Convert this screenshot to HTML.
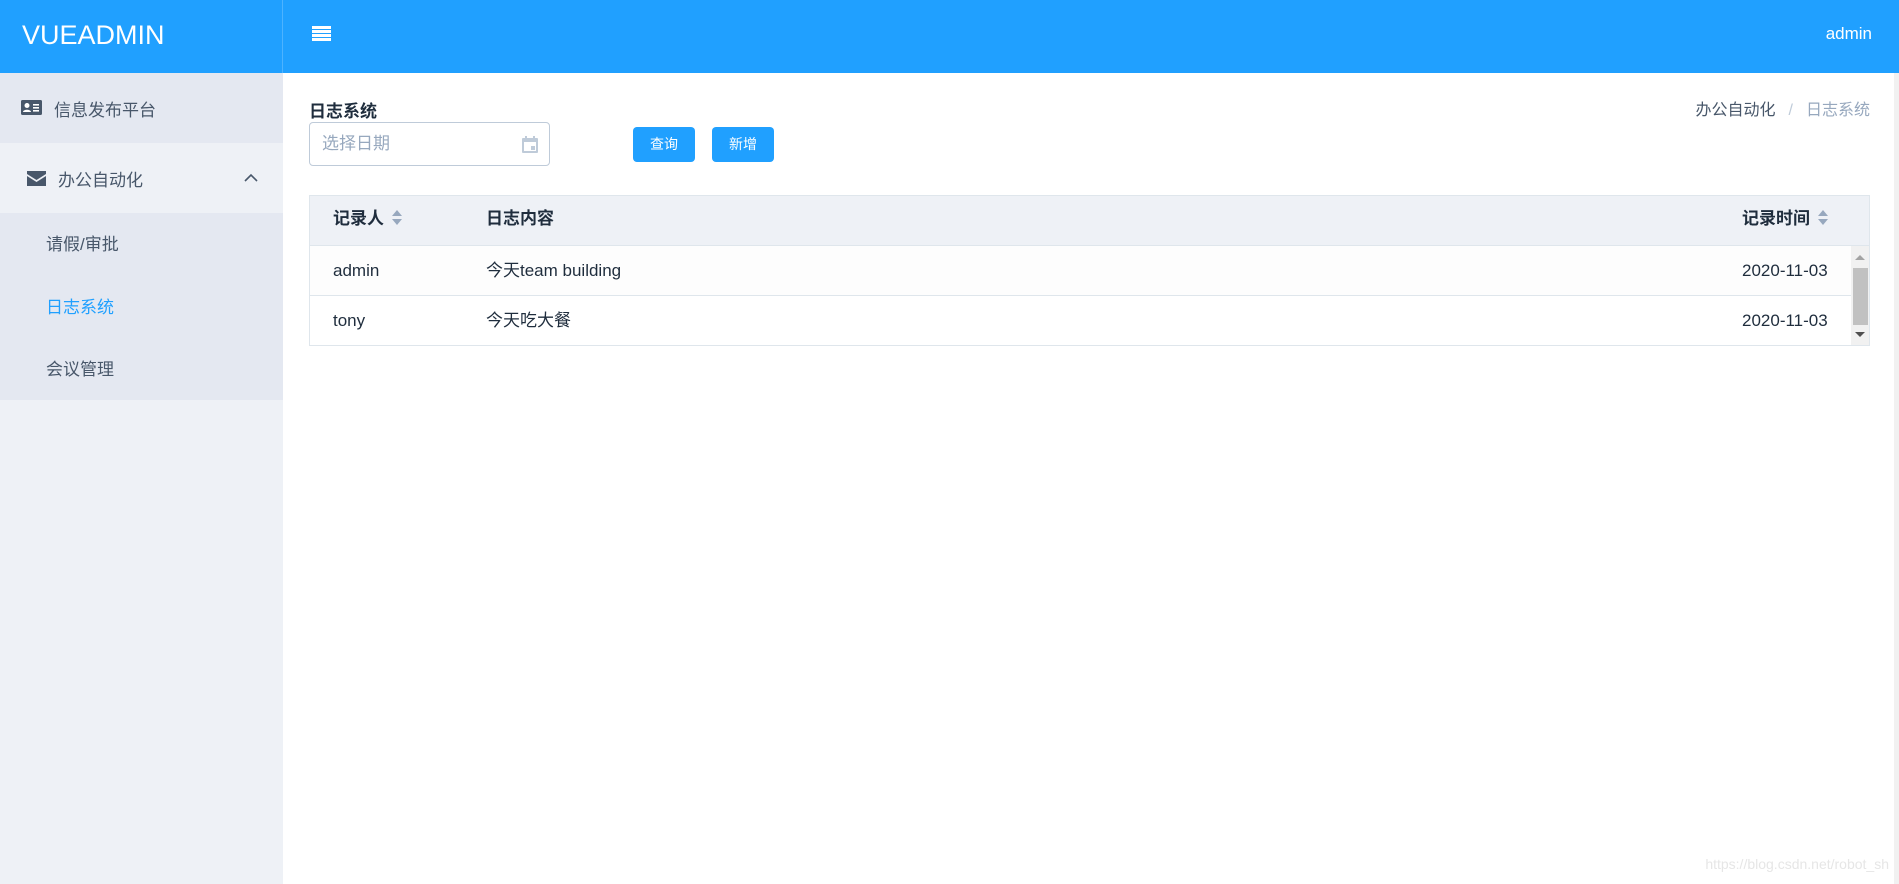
<!DOCTYPE html>
<html><head><meta charset="utf-8"><style>
*{margin:0;padding:0;box-sizing:border-box}
body{width:1899px;height:884px;overflow:hidden;background:#fff;font-family:"Liberation Sans","Noto Sans CJK SC",sans-serif;position:relative;color:#1f2d3d}
.abs{position:absolute}
.hdr{left:0;top:0;width:1899px;height:73px;background:#20a0ff}
.logo{left:0;top:0;width:283px;height:73px;border-right:1px solid #4db3ff;color:#fff;font-size:27px;line-height:71px;padding-left:22px}
.side{left:0;top:73px;width:283px;height:811px;background:#eef1f6}
.row{position:absolute;left:0;width:283px;font-size:17px;color:#48576a;display:flex;align-items:center}
.th{font-weight:bold;font-size:17px;color:#1f2d3d;line-height:46px;height:46px;white-space:nowrap}
.td{font-size:17px;color:#1f2d3d;line-height:50px;height:50px;white-space:nowrap}
.sort{display:inline-block;vertical-align:middle;margin-left:8px;width:10px;height:16px;position:relative;top:-2px}
.sort:before{content:"";position:absolute;left:0;top:0;border:5px solid transparent;border-bottom:6px solid #97a8be;border-top:0}
.sort:after{content:"";position:absolute;left:0;top:9px;border:5px solid transparent;border-top:6px solid #97a8be;border-bottom:0}
.btn{background:#20a0ff;color:#fff;font-size:14px;border-radius:4px;text-align:center;line-height:35px;height:35px;top:127px}
</style></head><body>
<div class="abs hdr"></div>
<div class="abs logo">VUEADMIN</div>
<div class="abs" style="left:312px;top:26px;width:19px">
 <div style="height:3px;background:#fff;margin-bottom:1px"></div><div style="height:3px;background:#fff;margin-bottom:1px"></div><div style="height:3px;background:#fff;margin-bottom:1px"></div><div style="height:3px;background:#fff"></div>
</div>
<div class="abs" style="right:27px;top:24px;color:#fff;font-size:17px">admin</div>

<div class="abs side"></div>
<div class="row" style="top:73px;height:70px;background:#e4e8f1">
 <svg style="margin-left:21px" width="21" height="16" viewBox="0 0 21 16"><rect x="0" y="0" width="21" height="15" rx="1.5" fill="#48576a"/><circle cx="6" cy="5.5" r="2.5" fill="#fff"/><path d="M2 12c0-3 8-3 8 0z" fill="#fff"/><rect x="12" y="4" width="6" height="1.6" fill="#fff"/><rect x="12" y="7" width="6" height="1.6" fill="#fff"/><rect x="12" y="10" width="6" height="1.6" fill="#fff"/></svg>
 <span style="margin-left:12px">信息发布平台</span></div>
<div class="row" style="top:143px;height:70px;background:#eef1f6">
 <svg style="margin-left:27px" width="19" height="16" viewBox="0 0 19 16"><path d="M0 1h19v3l-9.5 6L0 4z" fill="#48576a"/><path d="M0 6l9.5 6 9.5-6v10H0z" fill="#48576a"/></svg>
 <span style="margin-left:12px">办公自动化</span>
 <svg style="position:absolute;left:244px;top:30px" width="14" height="9" viewBox="0 0 14 9"><path d="M1 8l6-6 6 6" stroke="#48576a" stroke-width="1.6" fill="none"/></svg></div>
<div class="abs" style="left:0;top:213px;width:283px;height:187px;background:#e4e8f1"></div>
<div class="row" style="top:222px;height:40px;padding-left:46px">请假/审批</div>
<div class="row" style="top:285px;height:40px;padding-left:46px;color:#20a0ff">日志系统</div>
<div class="row" style="top:347px;height:40px;padding-left:46px">会议管理</div>

<div class="abs" style="left:309px;top:97px;font-weight:bold;font-size:17px;color:#1f2d3d">日志系统</div>
<div class="abs" style="right:29px;top:96px;font-size:16px;color:#48576a">办公自动化<span style="color:#bfcbd9;margin:0 13px">/</span><span style="color:#97a8be">日志系统</span></div>
<div class="abs" style="left:309px;top:122px;width:241px;height:44px;border:1px solid #bfcbd9;border-radius:4px;font-size:17px;color:#97a8be;line-height:42px;padding-left:12px">选择日期
 <svg style="position:absolute;right:11px;top:13px" width="16" height="17" viewBox="0 0 16 17"><rect x="3" y="0" width="2" height="3" fill="#bfcbd9"/><rect x="11" y="0" width="2" height="3" fill="#bfcbd9"/><rect x="0" y="2" width="16" height="15" rx="1" fill="#bfcbd9"/><rect x="2" y="6" width="12" height="9" fill="#fff"/><rect x="9" y="10" width="4" height="4" fill="#bfcbd9"/></svg></div>
<div class="abs btn" style="left:633px;width:62px">查询</div>
<div class="abs btn" style="left:712px;width:62px">新增</div>

<div class="abs" style="left:309px;top:195px;width:1561px;height:151px;border:1px solid #dfe6ec">
 <div class="abs" style="left:0;top:0;width:1559px;height:50px;background:#eef1f6;border-bottom:1px solid #dfe6ec"></div>
 <div class="abs th" style="left:23px;top:0">记录人<span class="sort"></span></div>
 <div class="abs th" style="left:176px;top:0">日志内容</div>
 <div class="abs th" style="left:1432px;top:0">记录时间<span class="sort"></span></div>
 <div class="abs" style="left:0;top:50px;width:1541px;height:50px;background:#fdfdfd;border-bottom:1px solid #dfe6ec"></div>
 <div class="abs td" style="left:23px;top:50px">admin</div>
 <div class="abs td" style="left:176px;top:50px">今天team building</div>
 <div class="abs td" style="left:1432px;top:50px">2020-11-03</div>
 <div class="abs td" style="left:23px;top:100px">tony</div>
 <div class="abs td" style="left:176px;top:100px">今天吃大餐</div>
 <div class="abs td" style="left:1432px;top:100px">2020-11-03</div>
 <div class="abs" style="left:1541px;top:50px;width:18px;height:99px;background:#f1f1f1">
  <div class="abs" style="left:4px;top:9px;border:5px solid transparent;border-bottom:5px solid #a3a3a3;border-top:0"></div>
  <div class="abs" style="left:2px;top:22px;width:15px;height:57px;background:#c1c1c1"></div>
  <div class="abs" style="left:4px;top:86px;border:5px solid transparent;border-top:5px solid #505050;border-bottom:0"></div>
 </div>
</div>
<div class="abs" style="left:1894px;top:73px;width:5px;height:811px;background:#f1f1f1"></div>
<div class="abs" style="right:10px;top:856px;font-size:14px;color:#e6e6e6">https://blog.csdn.net/robot_sh</div>
</body></html>
